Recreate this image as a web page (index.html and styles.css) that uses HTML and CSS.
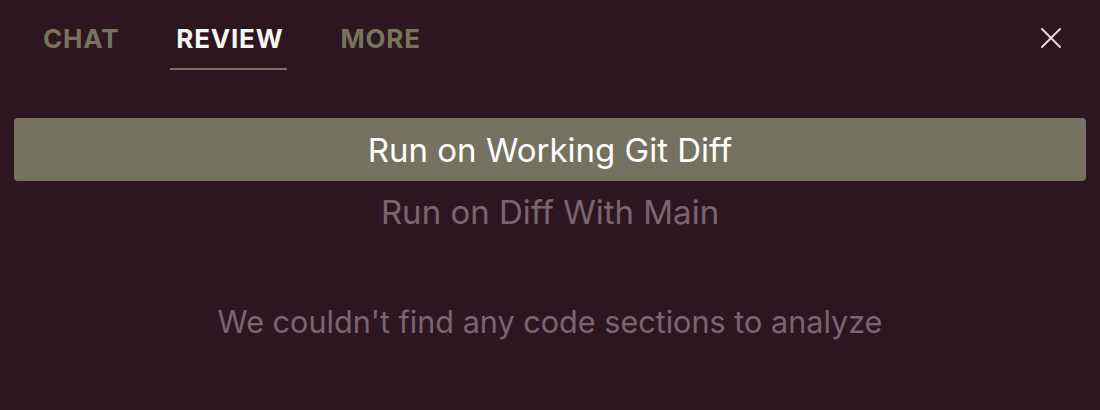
FILE: index.html
```html
<!DOCTYPE html>
<html>
<head>
<meta charset="utf-8">
<link rel="stylesheet" href="styles.css">
</head>
<body>
<div class="panel">
  <div class="tabbar">
    <div class="tabs">
      <div class="tab">CHAT</div>
      <div class="tab active">REVIEW</div>
      <div class="tab">MORE</div>
    </div>
    <button class="close" aria-label="Close">
      <svg width="22" height="22" viewBox="0 0 22 22"><path d="M2 2L20 20M20 2L2 20" stroke="#dcdcdc" stroke-width="2" stroke-linecap="round"/></svg>
    </button>
  </div>
  <div class="actions">
    <button class="primary">Run on Working Git Diff</button>
    <button class="secondary">Run on Diff With Main</button>
  </div>
  <p class="empty">We couldn't find any code sections to analyze</p>
</div>
</body>
</html>
```
FILE: styles.css
```css
html, body {
  margin: 0;
  padding: 0;
  background: #2e1620;
  width: 1100px;
  height: 410px;
  overflow: hidden;
}
.panel {
  font-family: Inter, "Noto Sans", sans-serif;
  padding: 0 14px 0 14px;
}
.tabbar {
  display: flex;
  justify-content: space-between;
  align-items: flex-start;
  padding-top: 20px;
}
.tabs {
  display: flex;
  gap: 47px;
  padding-left: 23px;
}
.tab {
  font-size: 26px;
  font-weight: 700;
  letter-spacing: 0.8px;
  color: #77735f;
  padding: 0 4px 0 6px;
  height: 48px;
  line-height: 38px;
  border-bottom: 2px solid transparent;
}
.tab.active {
  color: #f7f7f2;
  border-bottom-color: #77735f;
}
.close {
  background: none;
  border: 0;
  padding: 0;
  margin-top: 7px;
  margin-right: 24px;
  width: 22px;
  height: 22px;
  cursor: pointer;
}
.close svg { display: block; }
.actions {
  display: flex;
  flex-direction: column;
  margin-top: 48px;
}
.primary {
  font-family: inherit;
  height: 63px;
  background: #75725f;
  color: #ffffff;
  border: 0;
  border-radius: 4px;
  font-size: 33px;
}
.secondary {
  font-family: inherit;
  background: none;
  border: 0;
  color: #7a6570;
  font-size: 33px;
  height: 64px;
  padding-bottom: 4px;
}
.empty {
  margin: 58px 0 0 0;
  text-align: center;
  color: #7a6570;
  font-size: 30.6px;
}
```
